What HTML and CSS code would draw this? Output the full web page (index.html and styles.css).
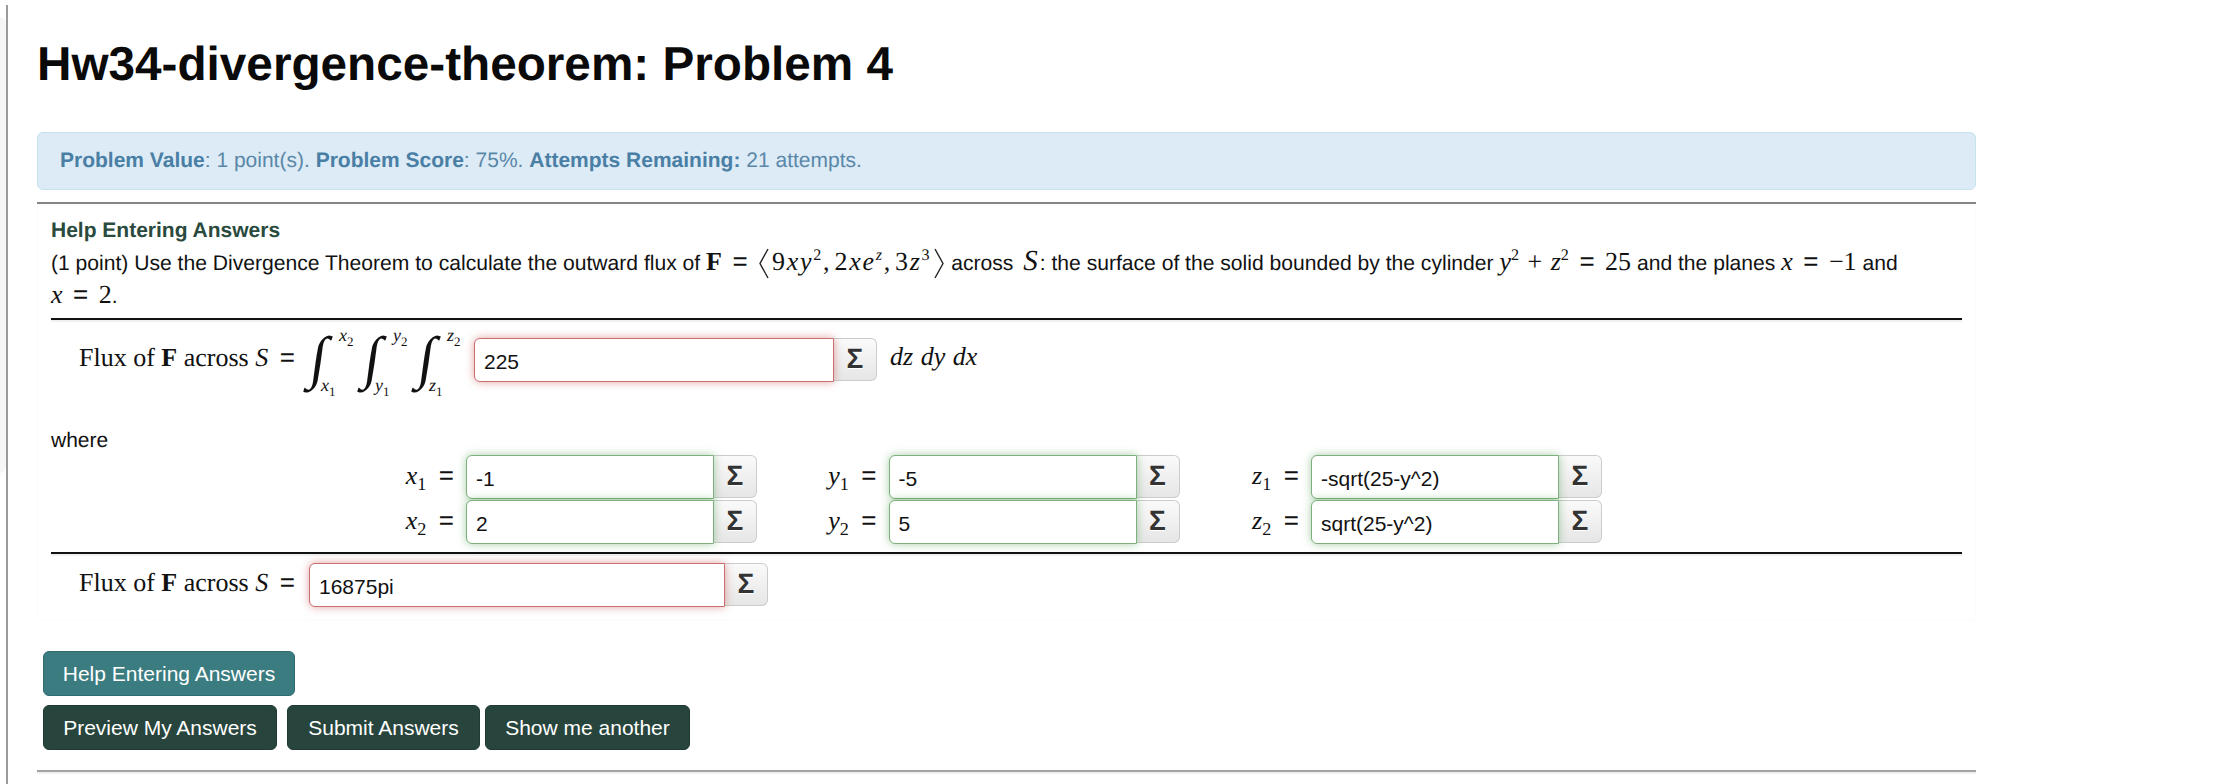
FILE: index.html
```html
<!DOCTYPE html>
<html lang="en">
<head>
<meta charset="utf-8">
<title>Hw34-divergence-theorem: Problem 4</title>
<link rel="stylesheet" href="styles.css">
</head>
<body>
<div class="edge-panel"></div>
<main class="page">
  <h1 class="title">Hw34-divergence-theorem: Problem 4</h1>
  <div class="alert"><span><b>Problem Value</b>: 1 point(s). <b>Problem Score</b>: 75%. <b>Attempts Remaining:</b> 21 attempts.</span></div>
  <hr class="rule-gray">
  <section class="problem">
    <div class="help-link">Help Entering Answers</div>
    <p class="statement">(1 point) Use the Divergence Theorem to calculate the outward flux of <span class="m m-big"><b class="bf">F</b> <span class="eq">=</span> <svg class="bracket" viewBox="0 0 12 31" aria-hidden="true"><path d="M10 1 L2 15.5 L10 30" /></svg><span class="m-vec">9<i>x</i><i>y</i><sup>2</sup>, 2<i>x</i><i>e</i><sup><i>z</i></sup>, 3<i>z</i><sup>3</sup></span><svg class="bracket" viewBox="0 0 12 31" aria-hidden="true"><path d="M2 1 L10 15.5 L2 30" /></svg></span> across <span class="m m-big m-s"><i>S</i></span>: the surface of the solid bounded by the cylinder <span class="m m-big"><i>y</i><sup>2</sup> <span class="plus">+</span> <i>z</i><sup>2</sup> <span class="eq">=</span> 25</span> and the planes <span class="m m-big"><i>x</i> <span class="eq">=</span> −1</span> and<br><span class="m m-big"><i>x</i> <span class="eq">=</span> 2</span>.</p>
    <hr class="rule-black">
    <div class="row row-integral">
      <span class="m m-row">Flux of <b>F</b> across <i>S</i> <span class="eq">=</span></span>
      <span class="integrals">
        <span class="integral"><span class="sign">∫</span><span class="up m"><i>x</i><sub>2</sub></span><span class="low m"><i>x</i><sub>1</sub></span></span>
        <span class="integral"><span class="sign">∫</span><span class="up m"><i>y</i><sub>2</sub></span><span class="low m"><i>y</i><sub>1</sub></span></span>
        <span class="integral"><span class="sign">∫</span><span class="up m"><i>z</i><sub>2</sub></span><span class="low m"><i>z</i><sub>1</sub></span></span>
      </span>
      <span class="group group-wide">
        <input class="field bad" value="225" readonly>
        <span class="sigma">Σ</span>
      </span>
      <span class="m m-row diff"><i>dz</i> <i>dy</i> <i>dx</i></span>
    </div>
    <div class="where">where</div>
    <div class="limits">
      <span class="m lab"><i>x</i><sub>1</sub> <span class="eq">=</span></span>
      <span class="group"><input class="field good" value="-1" readonly><span class="sigma">Σ</span></span>
      <span class="m lab"><i>y</i><sub>1</sub> <span class="eq">=</span></span>
      <span class="group"><input class="field good" value="-5" readonly><span class="sigma">Σ</span></span>
      <span class="m lab"><i>z</i><sub>1</sub> <span class="eq">=</span></span>
      <span class="group"><input class="field good" value="-sqrt(25-y^2)" readonly><span class="sigma">Σ</span></span>
      <span class="m lab"><i>x</i><sub>2</sub> <span class="eq">=</span></span>
      <span class="group"><input class="field good" value="2" readonly><span class="sigma">Σ</span></span>
      <span class="m lab"><i>y</i><sub>2</sub> <span class="eq">=</span></span>
      <span class="group"><input class="field good" value="5" readonly><span class="sigma">Σ</span></span>
      <span class="m lab"><i>z</i><sub>2</sub> <span class="eq">=</span></span>
      <span class="group"><input class="field good" value="sqrt(25-y^2)" readonly><span class="sigma">Σ</span></span>
    </div>
    <hr class="rule-black rule-limits">
    <div class="row row-final">
      <span class="m m-row">Flux of <b>F</b> across <i>S</i> <span class="eq">=</span></span>
      <span class="group group-final">
        <input class="field bad" value="16875pi" readonly>
        <span class="sigma">Σ</span>
      </span>
    </div>
  </section>
  <div class="actions">
    <button class="btn btn-teal" type="button">Help Entering Answers</button>
    <div class="btn-row">
      <button class="btn btn-dark btn-preview" type="button">Preview My Answers</button>
      <button class="btn btn-dark btn-submit" type="button">Submit Answers</button>
      <button class="btn btn-dark btn-another" type="button">Show me another</button>
    </div>
  </div>
  <hr class="rule-bottom">
</main>
</body>
</html>
```

FILE: styles.css
```css
* { box-sizing: border-box; }
html, body { margin: 0; padding: 0; background: #fff; height: 784px; overflow: hidden; }
body {
  position: relative;
  font-family: "Liberation Sans", Arial, sans-serif;
  font-size: 21px;
  color: #111;
  text-rendering: geometricPrecision;
}
body::before {
  content: "";
  position: absolute;
  left: 6px; top: 5px; bottom: 0;
  width: 2px;
  background: #9a9a9a;
}
.edge-panel {
  position: absolute;
  left: 0; top: 17px;
  width: 6px; height: 456px;
  background: #f6f6f6;
  border-radius: 0 8px 8px 0;
}
.page { margin-left: 37px; width: 1939px; }
.title {
  margin: 37px 0 0;
  font-size: 47.7px;
  line-height: 56px;
  font-weight: 700;
  color: #0a0a0a;
}
.alert {
  margin-top: 39px;
  height: 58px;
  padding: 0 22px;
  display: flex;
  align-items: center;
  background: #dcebf6;
  border: 1px solid #c4e3ef;
  border-radius: 6px;
  color: #5a87a8;
}
.alert b { color: #4a7fa5; }
hr { margin: 0; border: 0; height: 2px; }
.rule-gray { margin-top: 12px; background: #858585; }
.problem {
  padding: 11px 14px 13px;
  box-shadow: inset 0 0 0 1px #fbfbfb;
}
.help-link { font-weight: 700; color: #2a4a3e; line-height: 32px; }
.statement { margin: 0; font-size: 21.1px; line-height: 33px; height: 66px; }
.rule-black { margin-top: 5px; background: #111; box-shadow: 0 2px 0 #f0f0f0; }
.m { font-family: "Liberation Serif", "Times New Roman", serif; white-space: nowrap; color: #111; }
.m-big { font-size: 26px; line-height: 0; }
.m-s { font-size: 29px; margin: 0 2px 0 4px; }
.m sup, .m sub { font-size: 0.62em; line-height: 0; }
.bf { font-weight: 700; }
.eq { font-family: "Liberation Sans", sans-serif; margin: 0 4px; }
.plus { margin: 0 2px; }
.bracket { width: 12px; height: 31px; vertical-align: -9px; }
.bracket path { fill: none; stroke: #222; stroke-width: 1.4; }
.m-vec { letter-spacing: 1.7px; word-spacing: -5px; margin: 0 2px; }
.row { display: flex; align-items: center; padding-left: 28px; }
.row-integral { margin-top: 18px; height: 44px; }
.m-row { font-size: 26px; padding-bottom: 6px; width: 218px; }
.m-row .eq { margin: 0 0 0 5px; }
.integrals { display: flex; margin: 0 0 0 9px; height: 44px; align-items: center; }
.integral { position: relative; display: block; width: 54px; height: 44px; }
.sign {
  position: absolute;
  left: 5px; top: -18px;
  font-family: "Liberation Serif", serif;
  font-size: 58px;
  line-height: 76px;
  transform: skewX(-8deg);
}
.up, .low { position: absolute; font-size: 18px; line-height: 20px; }
.up { left: 33px; top: -13px; }
.low { left: 15px; top: 37px; }
.up sub, .low sub { font-size: 0.72em; }
.group { display: flex; height: 44px; width: 291px; }
.group-wide { width: 403px; margin-left: 6px; }
.group-final { width: 459px; margin-left: 12px; }
.field {
  flex: 1;
  min-width: 0;
  height: 44px;
  padding: 4px 9px 0;
  font-family: "Liberation Sans", Arial, sans-serif;
  font-size: 21px;
  color: #111;
  background: #fff;
  border: 1px solid;
  border-radius: 6px 0 0 6px;
  outline: none;
  position: relative;
  z-index: 1;
}
.field.bad { border-color: #c96f6f; box-shadow: 0 0 8px rgba(200, 70, 70, .5); }
.field.good { border-color: #7db07d; box-shadow: 0 0 8px rgba(80, 160, 80, .5); }
.sigma {
  width: 43px;
  height: 43px;
  flex: none;
  display: flex;
  align-items: center;
  justify-content: center;
  padding-bottom: 2px;
  font-weight: 700;
  font-size: 28px;
  color: #333;
  text-shadow: 0 1px 0 #fff;
  background: linear-gradient(#fafafa, #e6e6e6);
  border: 1px solid #ccc;
  border-left: 0;
  border-radius: 0 6px 6px 0;
}
.diff { margin-left: 13px; width: auto; word-spacing: 1px; }
.where { margin-top: 45px; line-height: 28px; }
.limits {
  margin-left: 283.5px;
  display: grid;
  grid-template-columns: repeat(3, 131.5px 291px);
  grid-auto-rows: 44px;
  row-gap: 1px;
}
.lab { font-size: 26px; text-align: right; padding: 0 10px 0 0; line-height: 41px; }
.lab sub { font-size: 0.7em; }
.lab .eq { margin: 0 2px 0 6px; }
.rule-limits { margin-top: 8px; }
.row-final { margin-top: 9px; height: 44px; }
.actions { margin: 31px 0 0 6px; }
.btn {
  display: block;
  height: 45px;
  padding: 0;
  font-family: "Liberation Sans", Arial, sans-serif;
  font-size: 21px;
  color: #fff;
  border-radius: 6px;
  border: 1px solid;
}
.btn-teal { width: 252px; background: #3b7c80; border-color: #2f6b70; }
.btn-dark { background: #27453c; border-color: #1f3a32; }
.btn-row { display: flex; margin-top: 9px; }
.btn-preview { width: 234px; }
.btn-submit { width: 193px; margin-left: 10px; }
.btn-another { width: 205px; margin-left: 5px; }
.rule-bottom { margin-top: 20px; background: #a3a3a3; box-shadow: 0 2px 0 #f0f0f0; }
```
